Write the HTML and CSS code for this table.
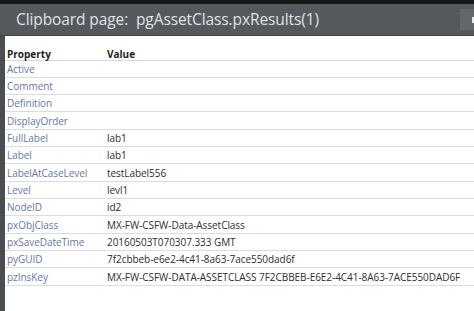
FILE: index.html
```html
<!DOCTYPE html>
<html>
<head>
<meta charset="utf-8">
<link rel="stylesheet" href="styles.css">
</head>
<body>
<div class="topbar"></div>
<div class="frame">
  <div class="titlebar">
    <div class="title">Clipboard page:&nbsp; pgAssetClass.pxResults(1)</div>
    <div class="tbtn"><span class="tbtn-mark"></span></div>
  </div>
  <div class="content">
    <table class="props">
      <thead>
        <tr><th class="c1">Property</th><th class="c2">Value</th></tr>
      </thead>
      <tbody>
        <tr><td class="c1">Active</td><td class="c2"></td></tr>
        <tr><td class="c1">Comment</td><td class="c2"></td></tr>
        <tr><td class="c1">Definition</td><td class="c2"></td></tr>
        <tr><td class="c1">DisplayOrder</td><td class="c2"></td></tr>
        <tr><td class="c1">FullLabel</td><td class="c2">lab1</td></tr>
        <tr><td class="c1">Label</td><td class="c2">lab1</td></tr>
        <tr><td class="c1">LabelAtCaseLevel</td><td class="c2">testLabel556</td></tr>
        <tr><td class="c1">Level</td><td class="c2">levl1</td></tr>
        <tr><td class="c1">NodeID</td><td class="c2">id2</td></tr>
        <tr><td class="c1">pxObjClass</td><td class="c2">MX-FW-CSFW-Data-AssetClass</td></tr>
        <tr><td class="c1">pxSaveDateTime</td><td class="c2">20160503T070307.333 GMT</td></tr>
        <tr><td class="c1">pyGUID</td><td class="c2">7f2cbbeb-e6e2-4c41-8a63-7ace550dad6f</td></tr>
        <tr><td class="c1">pzInsKey</td><td class="c2">MX-FW-CSFW-DATA-ASSETCLASS 7F2CBBEB-E6E2-4C41-8A63-7ACE550DAD6F</td></tr>
      </tbody>
    </table>
  </div>
</div>
</body>
</html>
```
FILE: styles.css
```css
html, body {
  margin: 0;
  padding: 0;
  width: 474px;
  height: 311px;
  overflow: hidden;
  background: #4b4e51;
  font-family: "Open Sans", "Liberation Sans", sans-serif;
}
.topbar {
  height: 4px;
  background: #151617;
}
.frame {
  height: 307px;
  padding-left: 5px;
  display: flex;
  flex-direction: column;
}
.titlebar {
  height: 31px;
  margin-left: -5px;
  padding-left: 16px;
  background: #55585c;
  display: flex;
  align-items: center;
  justify-content: space-between;
  border-bottom: 1px solid #3f4245;
}
.title {
  color: #e0e2e4;
  font-size: 15.5px;
  font-weight: 400;
  letter-spacing: -0.1px;
  white-space: nowrap;
  padding-bottom: 1px;
}
.tbtn {
  width: 14px;
  height: 21px;
  background: #63666a;
  display: flex;
  align-items: center;
  justify-content: flex-end;
}
.tbtn-mark {
  width: 2px;
  height: 6px;
  background: #e8e8e8;
}
.content {
  flex: 1;
  background: #ffffff;
}
.props {
  border-collapse: collapse;
  width: 100%;
  font-size: 10px;
}
.props th {
  text-align: left;
  font-weight: 700;
  color: #1e1e1e;
  height: 24px;
  line-height: 12px;
  padding: 0 0 0 2px;
  vertical-align: bottom;
  border-bottom: 1px solid #d8d8d8;
  box-sizing: border-box;
}
.props td {
  height: 16.33px;
  padding: 0 0 0 2px;
  border-bottom: 1px solid #dcdcdc;
  white-space: nowrap;
  vertical-align: middle;
  letter-spacing: -0.05px;
}
.props .c1 {
  width: 98px;
}
.props td.c1 {
  color: #6677a8;
}
.props td.c2 {
  color: #2d2d2d;
}
```
